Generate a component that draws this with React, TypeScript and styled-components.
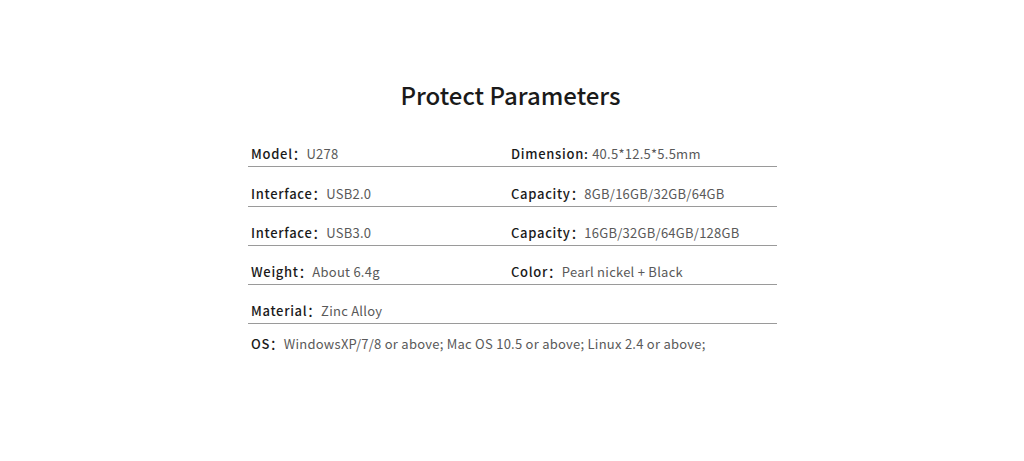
import React from "react";
import styled, { createGlobalStyle } from "styled-components";

const Global = createGlobalStyle`
  html, body { margin: 0; padding: 0; background: #fff; }
  body { font-family: "Noto Sans CJK SC", "Noto Sans", sans-serif; }
`;

const Page = styled.div`
  width: 1024px;
  height: 461px;
  padding-top: 78px;
  box-sizing: border-box;
  display: flex;
  flex-direction: column;
  align-items: center;
`;

const Title = styled.h1`
  margin: 0;
  font-size: 24px;
  line-height: 34px;
  font-weight: 500;
  color: #1a1a1a;
  letter-spacing: 0px;
  margin-left: -3px;
`;

const Table = styled.div`
  width: 529px;
  margin-top: 16px;
  margin-left: 1px;
  display: flex;
  flex-direction: column;
`;

const Row = styled.div<{ $last?: boolean }>`
  display: grid;
  grid-template-columns: 260px 1fr;
  height: ${(p) => (p.$last ? "32px" : "39.25px")};
  align-items: end;
  box-sizing: border-box;
  border-bottom: ${(p) => (p.$last ? "none" : "1px solid #9a9a9a")};
`;

const Cell = styled.div`
  padding-left: 3px;
  font-size: 13px;
  line-height: 24px;
  white-space: nowrap;
`;

const Label = styled.span`
  color: #1a1a1a;
  font-weight: 500;
  letter-spacing: 0.7px;
`;

const Value = styled.span`
  color: #595959;
  font-weight: 400;
  letter-spacing: 0.25px;
`;

const rows: [string, string, string?, string?][] = [
  ["Model：", "U278", "Dimension: ", "40.5*12.5*5.5mm"],
  ["Interface：", "USB2.0", "Capacity：", "8GB/16GB/32GB/64GB"],
  ["Interface：", "USB3.0", "Capacity：", "16GB/32GB/64GB/128GB"],
  ["Weight：", "About 6.4g", "Color：", "Pearl nickel + Black"],
  ["Material：", "Zinc Alloy"],
];

export default function App() {
  return (
    <>
      <Global />
      <Page>
        <Title>Protect Parameters</Title>
        <Table>
          {rows.map((r, i) => (
            <Row key={i}>
              <Cell>
                <Label>{r[0]}</Label>
                <Value>{r[1]}</Value>
              </Cell>
              <Cell>
                {r[2] && <Label>{r[2]}</Label>}
                {r[3] && <Value>{r[3]}</Value>}
              </Cell>
            </Row>
          ))}
          <Row $last>
            <Cell>
              <Label>OS：</Label>
              <Value>WindowsXP/7/8 or above; Mac OS 10.5 or above; Linux 2.4 or above;</Value>
            </Cell>
          </Row>
        </Table>
      </Page>
    </>
  );
}
